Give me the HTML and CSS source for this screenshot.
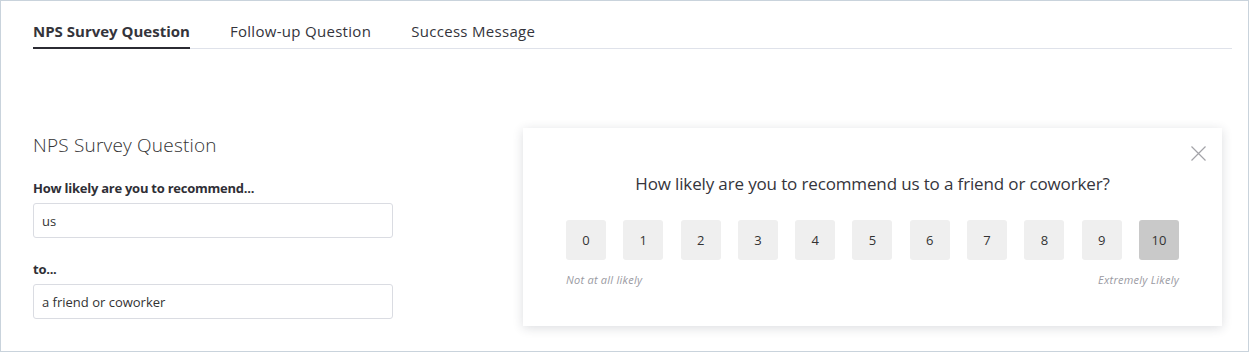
FILE: index.html
```html
<!DOCTYPE html>
<html lang="en">
<head>
    <meta charset="UTF-8">
    <meta name="viewport" content="width=device-width, initial-scale=1.0">
    <title>NPS Survey</title>
    <link rel="stylesheet" href="styles.css">
</head>
<body>
    <div class="frame">
        <div class="tabs">
            <div class="tab active">NPS Survey Question</div>
            <div class="tab">Follow-up Question</div>
            <div class="tab">Success Message</div>
        </div>

        <div class="content">
            <div class="form">
                <h2>NPS Survey Question</h2>
                <label for="us-input">How likely are you to recommend...</label>
                <input id="us-input" type="text" value="us">
                <label for="to-input">to...</label>
                <input id="to-input" type="text" value="a friend or coworker">
            </div>

            <div class="preview">
                <button class="close" aria-label="Close">
                    <svg width="15" height="15" viewBox="0 0 15 15">
                        <path d="M0.5 0.5 L14.5 14.5 M14.5 0.5 L0.5 14.5" stroke="#a3a3a8" stroke-width="1.2" fill="none"/>
                    </svg>
                </button>
                <p class="question">How likely are you to recommend us to a friend or coworker?</p>
                <div class="scale">
                    <span class="score">0</span>
                    <span class="score">1</span>
                    <span class="score">2</span>
                    <span class="score">3</span>
                    <span class="score">4</span>
                    <span class="score">5</span>
                    <span class="score">6</span>
                    <span class="score">7</span>
                    <span class="score">8</span>
                    <span class="score">9</span>
                    <span class="score selected">10</span>
                </div>
                <div class="legend">
                    <span>Not at all likely</span>
                    <span>Extremely Likely</span>
                </div>
            </div>
        </div>
    </div>
</body>
</html>
```

FILE: styles.css
```css
body {
    margin: 0;
    font-family: 'Open Sans', Lato, sans-serif;
    color: #2f2f36;
    background-color: #fff;
}
.frame {
    width: 1249px;
    height: 352px;
    box-sizing: border-box;
    border: 1px solid #c9d3dc;
    overflow: hidden;
}
.tabs {
    display: flex;
    gap: 40px;
    margin: 0 16px 0 32px;
    border-bottom: 1px solid #dfe2ea;
}
.tab {
    font-size: 15px;
    line-height: 20px;
    padding: 20px 0 6px;
    border-bottom: 2px solid transparent;
    margin-bottom: -1px;
    color: #34343b;
    letter-spacing: 0.3px;
}
.tab.active {
    font-weight: bold;
    letter-spacing: 0;
    border-bottom-color: #2b2b33;
}
.content {
    display: flex;
    align-items: flex-start;
    padding: 79px 0 0 32px;
}
.form {
    width: 360px;
    padding-top: 5px;
    display: flex;
    flex-direction: column;
}
h2 {
    margin: 0 0 22px;
    font-size: 19px;
    line-height: 24px;
    font-weight: 300;
    color: #333;
    letter-spacing: 0.2px;
}
label {
    font-size: 13px;
    line-height: 18px;
    font-weight: bold;
    color: #2f2f36;
    letter-spacing: -0.25px;
    margin-bottom: 6px;
}
input {
    height: 35px;
    box-sizing: border-box;
    border: 1px solid #dadce2;
    border-radius: 3px;
    padding: 0 8px;
    font-family: inherit;
    font-size: 13px;
    color: #333;
    margin-bottom: 22px;
    outline: none;
}
.preview {
    position: relative;
    width: 699px;
    height: 198px;
    margin-left: 130px;
    box-sizing: border-box;
    padding: 45px 43px 0;
    background-color: #fff;
    box-shadow: 0 2px 10px rgba(40, 45, 60, 0.16);
}
.close {
    position: absolute;
    top: 18px;
    right: 16px;
    padding: 0;
    border: none;
    background: none;
    cursor: pointer;
}
.question {
    margin: 0;
    text-align: center;
    font-size: 17px;
    line-height: 22px;
    letter-spacing: -0.14px;
    color: #35353c;
}
.scale {
    display: flex;
    justify-content: space-between;
    margin-top: 25px;
}
.score {
    width: 40px;
    height: 40px;
    display: flex;
    align-items: center;
    justify-content: center;
    border-radius: 3px;
    background-color: #efefef;
    font-size: 13px;
    color: #333;
}
.score.selected {
    background-color: #c9c9c9;
}
.legend {
    display: flex;
    justify-content: space-between;
    margin-top: 12px;
    font-size: 11px;
    font-style: italic;
    letter-spacing: 0.25px;
    color: #9a9aa2;
}
```
